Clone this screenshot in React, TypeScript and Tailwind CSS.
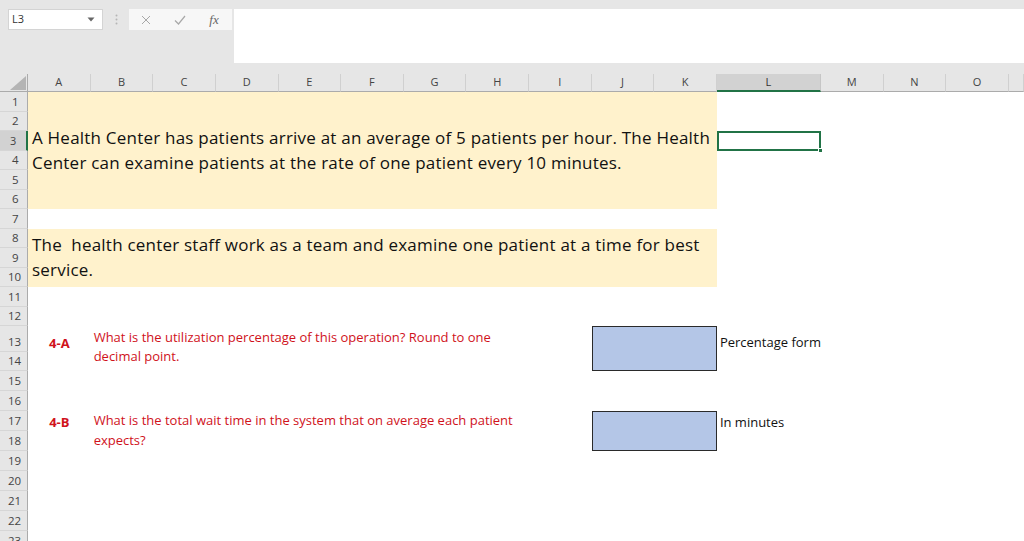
import React from "react";

const cols = ["A", "B", "C", "D", "E", "F", "G", "H", "I", "J", "K", "L", "M", "N", "O", ""];
const rows = Array.from({ length: 23 }, (_, i) => i + 1);

export default function App() {
  return (
    <div
      className="w-[1024px] h-[541px] overflow-hidden bg-[#e6e6e6] text-[#222]"
      style={{ fontFamily: '"Open Sans", "Noto Sans", sans-serif' }}
    >
      {/* formula bar area */}
      <div className="h-[74px] flex items-start pt-[9px] pl-[8px]">
        <div className="w-[95px] h-[21px] bg-white border border-[#d4d4d4] flex items-center justify-between px-[3px]">
          <span className="text-[11px] text-[#333]">L3</span>
          <svg width="8" height="5" viewBox="0 0 8 5" className="mr-[4px]">
            <path d="M0.5 0.5 L7.5 0.5 L4 4.5 Z" fill="#666" />
          </svg>
        </div>
        <div className="w-[26px] h-[21px] flex items-center justify-center">
          <svg width="3" height="11" viewBox="0 0 3 11">
            <circle cx="1.5" cy="1.5" r="1" fill="#b5b5b5" />
            <circle cx="1.5" cy="5.5" r="1" fill="#b5b5b5" />
            <circle cx="1.5" cy="9.5" r="1" fill="#b5b5b5" />
          </svg>
        </div>
        <div className="w-[103px] h-[21px] bg-[#f7f7f7] flex items-center">
          <div className="w-[34px] flex justify-center">
            <svg width="10" height="10" viewBox="0 0 10 10">
              <path d="M1 1 L9 9 M9 1 L1 9" stroke="#a8a8a8" strokeWidth="1" />
            </svg>
          </div>
          <div className="w-[34px] flex justify-center">
            <svg width="12" height="10" viewBox="0 0 12 10">
              <path d="M1 5.5 L4.5 9 L11 1" stroke="#a8a8a8" strokeWidth="1.2" fill="none" />
            </svg>
          </div>
          <div className="w-[34px] flex justify-center">
            <span
              className="text-[13px] italic text-[#666] leading-none"
              style={{ fontFamily: '"Liberation Serif", serif' }}
            >
              fx
            </span>
          </div>
        </div>
        <div className="ml-[2px] flex-1 h-[54px] bg-white" />
      </div>

      {/* sheet grid */}
      <div className="grid grid-cols-[28px_repeat(11,62.636px)_104px_repeat(3,62.67px)_1fr] grid-rows-[18px_repeat(12,19.5px)_25.5px_19.5px_repeat(9,20px)] bg-white">
        {/* corner */}
        <div className="col-start-1 row-start-1 bg-[#e6e6e6] border-r border-b border-[#ababab] flex items-end justify-end pr-[1px] pb-[1px]">
          <svg width="16" height="14" viewBox="0 0 16 14">
            <path d="M16 0 L16 14 L0 14 Z" fill="#b4b4b4" />
          </svg>
        </div>

        {/* column headers */}
        {cols.map((c, i) =>
          c === "L" ? (
            <div
              key={c + i}
              className="bg-[#d2d2d2] border-b-2 border-[#217346] border-r border-r-[#c6c6c6] flex items-center justify-center text-[11px] text-[#333]"
              style={{ gridRow: 1, gridColumn: i + 2 }}
            >
              {c}
            </div>
          ) : (
            <div
              key={c + i}
              className="bg-[#e6e6e6] border-b border-[#ababab] border-r border-r-[#d0d0d0] flex items-center justify-center text-[11px] text-[#444]"
              style={{ gridRow: 1, gridColumn: i + 2 }}
            >
              {c}
            </div>
          )
        )}

        {/* row headers */}
        {rows.map((r) =>
          r === 3 ? (
            <div
              key={r}
              className="bg-[#d2d2d2] border-r-2 border-[#217346] border-b border-b-[#d6d6d6] flex items-end pb-[2px] pl-[10px] text-[11px] leading-[14px] text-[#444]"
              style={{ gridRow: r + 1, gridColumn: 1 }}
            >
              {r}
            </div>
          ) : (
            <div
              key={r}
              className={`bg-[#e6e6e6] border-r border-[#ababab] border-b border-b-[#d6d6d6] flex items-end pb-[2px] text-[11.5px] leading-[14px] text-[#444] ${
                r < 10 ? "pl-[12px]" : "pl-[8px]"
              }`}
              style={{ gridRow: r + 1, gridColumn: 1 }}
            >
              {r}
            </div>
          )
        )}

        {/* yellow block 1 */}
        <div className="col-start-2 col-end-13 row-start-2 row-end-8 bg-[#fff2cc] flex flex-col justify-center pl-[4px] pb-[2px] text-[17px] tracking-[0.22px] leading-[25px] text-[#111] whitespace-nowrap">
          <div>A Health Center has patients arrive at an average of 5 patients per hour. The Health</div>
          <div>Center can examine patients at the rate of one patient every 10 minutes.</div>
        </div>

        {/* selected cell L3 */}
        <div className="col-start-13 row-start-4 relative">
          <div className="absolute left-0 top-0 right-0 bottom-0 border-2 border-[#217346]" />
          <div className="absolute right-[-2px] bottom-[-2px] w-[5px] h-[5px] bg-[#217346] border border-white" />
        </div>

        {/* yellow block 2 */}
        <div className="col-start-2 col-end-13 row-start-9 row-end-12 bg-[#fff2cc] flex flex-col justify-center pl-[4px] pb-[1px] text-[17px] tracking-[0.22px] leading-[25px] text-[#111] whitespace-nowrap">
          <div>The&nbsp; health center staff work as a team and examine one patient at a time for best</div>
          <div>service.</div>
        </div>

        {/* 4-A */}
        <div className="col-start-2 row-start-14 flex items-end justify-center pb-[1px] text-[13px] font-bold text-[#d0121b] leading-[16px]">
          4-A
        </div>
        <div className="col-start-3 col-end-10 row-start-14 row-end-16 pt-[2px] pl-[3px] text-[13px] text-[#d0121b] leading-[19px] whitespace-nowrap">
          <div>What is the utilization percentage of this operation? Round to one</div>
          <div>decimal point.</div>
        </div>
        <div className="col-start-11 col-end-13 row-start-14 row-end-16 bg-[#b4c6e7] border border-[#2a2a2a]" />
        <div className="col-start-13 col-end-15 row-start-14 flex items-end pb-[1px] pl-[3px] text-[13px] leading-[17px] text-[#111] whitespace-nowrap">
          Percentage form
        </div>

        {/* 4-B */}
        <div className="col-start-2 row-start-18 flex items-center justify-center pt-[2px] text-[13px] font-bold text-[#d0121b] leading-[16px]">
          4-B
        </div>
        <div className="col-start-3 col-end-10 row-start-18 row-end-20 pl-[3px] text-[13px] text-[#d0121b] leading-[19.5px] whitespace-nowrap">
          <div>What is the total wait time in the system that on average each patient</div>
          <div>expects?</div>
        </div>
        <div className="col-start-11 col-end-13 row-start-18 row-end-20 bg-[#b4c6e7] border border-[#2a2a2a]" />
        <div className="col-start-13 col-end-15 row-start-18 flex items-center pt-[2px] pl-[3px] text-[13px] leading-[17px] text-[#111] whitespace-nowrap">
          In minutes
        </div>
      </div>
    </div>
  );
}
